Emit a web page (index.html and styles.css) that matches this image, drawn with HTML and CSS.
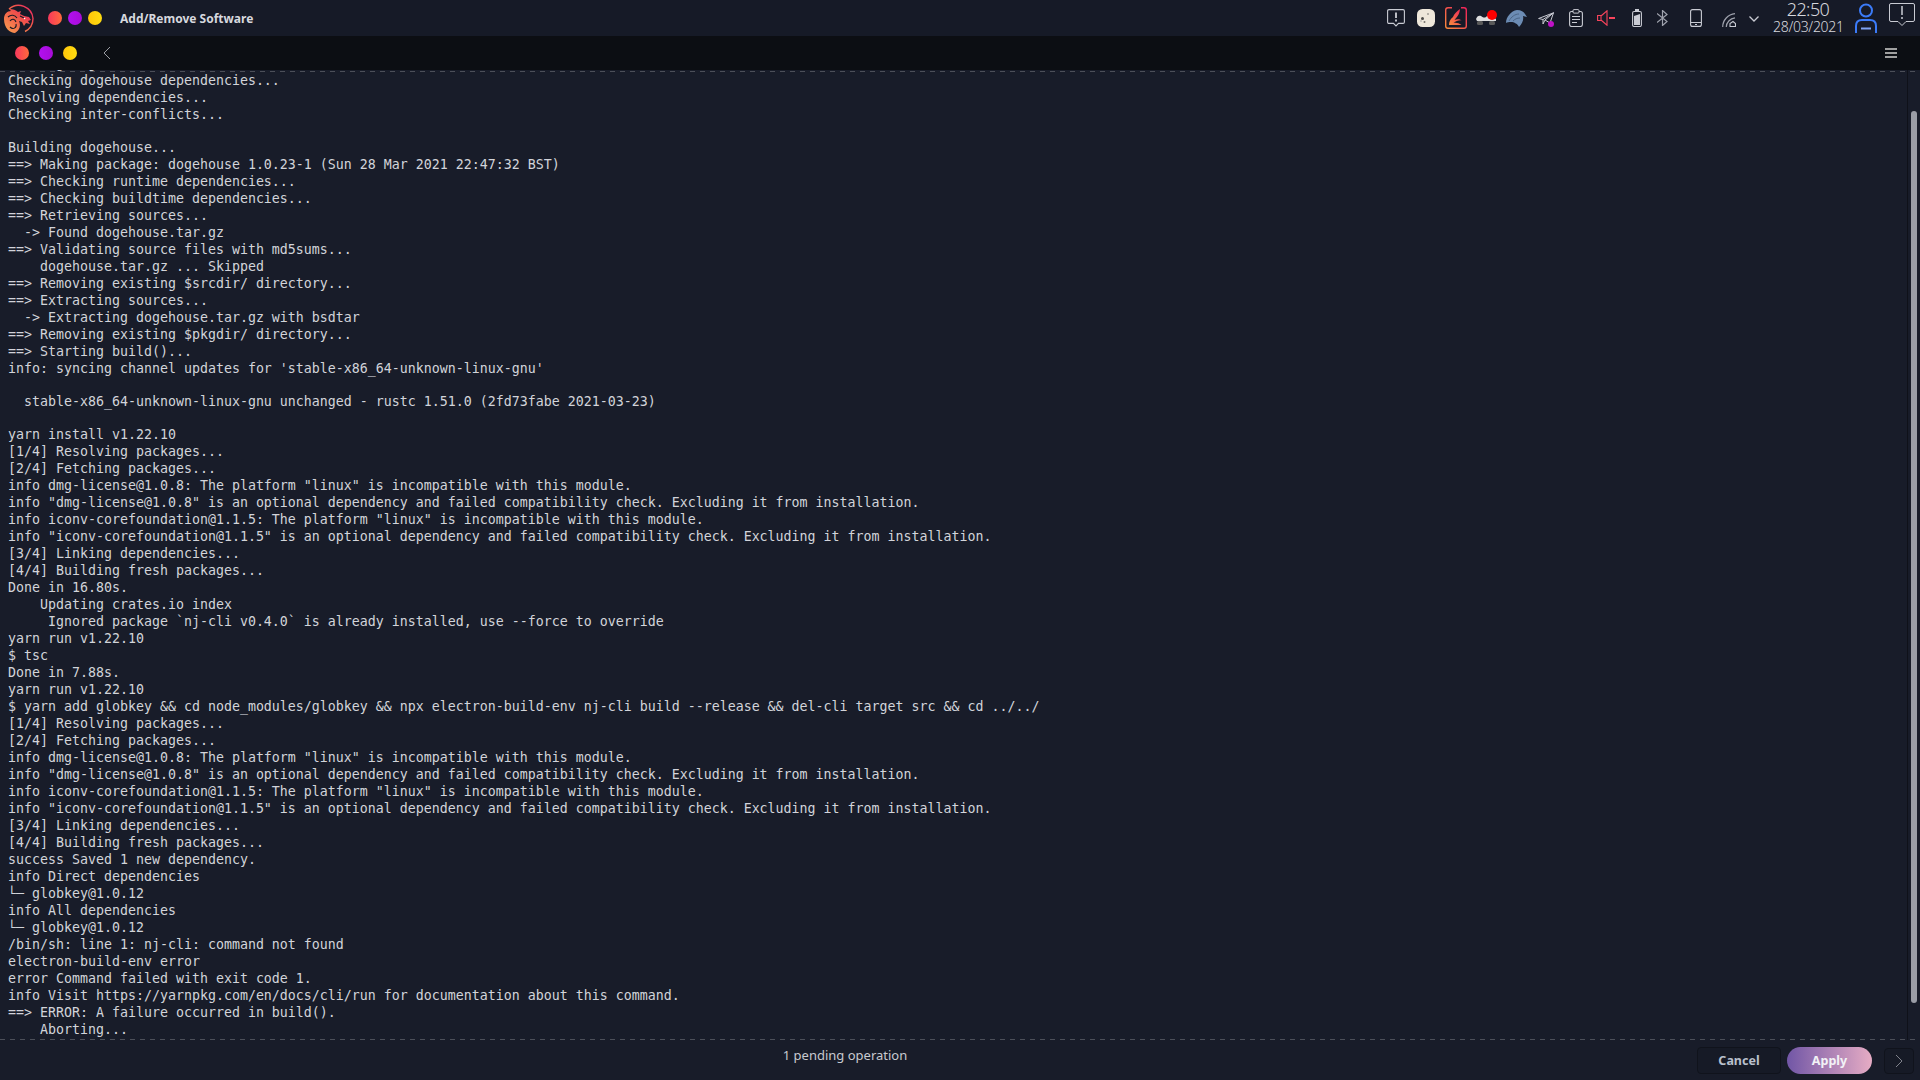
FILE: index.html
```html
<!DOCTYPE html>
<html lang="en">
<head>
<meta charset="utf-8">
<title>Add/Remove Software</title>
<link rel="stylesheet" href="styles.css">
</head>
<body>
<header class="topbar">
  <div class="top-left">
    <svg class="logo" width="31" height="31" viewBox="0 0 31 31"><defs><linearGradient id="lg" x1="0" y1="1" x2="1" y2="0"><stop offset="0" stop-color="#f9a450"/><stop offset="0.6" stop-color="#f0554a"/><stop offset="1" stop-color="#ef1f68"/></linearGradient></defs><path d="M6 6A14.500 14.500 0 0 1 30 15.500A14.500 14.500 0 0 1 22 28.500" fill="none" stroke="url(#lg)" stroke-width="1.4"/><path d="M1 16C1 11 4 8 8 8L6 6C10 6 13 7 15 9L18 8L17 11L21 13L26 14L28 17L25 18L27 21L23 20L21 23L19 19L16 18C18 22 17 27 12 30C7 30 1 25 1 16Z" fill="url(#lg)"/><path d="M5 14C8 11 12 12 14 15M7 18C9 15 12 16 13 19M7 24C10 27 14 25 13 21M17 13L21 15" fill="none" stroke="#161a27" stroke-width="1.100"/><circle cx="21.500" cy="15.500" r="0.800" fill="#fff"/></svg>
    <div class="dots top-dots"><span class="dot red"></span><span class="dot purple"></span><span class="dot yellow"></span></div>
    <span class="title">Add/Remove Software</span>
  </div>
  <div class="tray">
    <svg class="i-note" width="18" height="18" viewBox="0 0 18 18"><path d="M2 .6H16Q17.400 .6 17.400 2V13Q17.400 14.400 16 14.400H11.500L9 17L6.500 14.400H2Q.6 14.400 .6 13V2Q.6 .6 2 .6Z" fill="none" stroke="#c9cbd3" stroke-width="1.100"/><path d="M9 3.500V9M9 10.500V12.500" stroke="#d8dae0" stroke-width="1.700"/></svg>
    <svg class="i-face" width="18" height="18" viewBox="0 0 18 18"><rect width="18" height="18" rx="5.500" fill="#eee7da"/><circle cx="5.500" cy="9.500" r="1.500" fill="#4b4a48"/><circle cx="11" cy="5" r="1" fill="#a09c94"/><circle cx="7.500" cy="13" r="1" fill="#77746e"/><circle cx="4" cy="12" r="0.700" fill="#999"/></svg>
    <svg class="i-red" width="22" height="22" viewBox="0 0 22 22"><defs><linearGradient id="red" x1="0" y1="1" x2="1" y2="0"><stop offset="0" stop-color="#f98b3c"/><stop offset="1" stop-color="#f0205a"/></linearGradient></defs><path d="M7 .7H3Q.7 .7 .7 3V19Q.7 21.300 3 21.300H19Q21.300 21.300 21.300 19V3Q21.300 .7 19 .7H16" fill="none" stroke="url(#red)" stroke-width="1.400"/><path d="M15 2C12 4 9 7 8 10C5 12 4 15 4 18L16.500 18C14 16 11 15.500 8.500 16C11 14 14 13 17 13.500C14 11.500 11.500 12 9.500 13C11.500 10.500 14.500 8 15 2Z" fill="url(#red)"/></svg>
    <svg class="i-car" width="21" height="15" viewBox="0 0 21 15"><path d="M0 9C1 6 3 5 5 6C8 8 9 8 11 6L14 4L20 9V11H1Z" fill="#dedede"/><rect x="1" y="11" width="6" height="4" rx="1.500" fill="#5a5a5a"/><rect x="13" y="11" width="6" height="4" rx="1.500" fill="#5a5a5a"/><circle cx="16" cy="5" r="5" fill="#f00"/></svg>
    <svg class="i-bird" width="21" height="17" viewBox="0 0 21 17"><path d="M0 13C0 7 5 1 11 0C15 0 18 2 19 4L21 7L17 6C18 10 16 14 13 17C12 14 8 12 5 12C3 12 1 12 0 13Z" fill="#6c8cb4"/><path d="M3 11C5 7 9 4 13 4M7 11C9 9 11 8 14 8" fill="none" stroke="#4c6688" stroke-width="1"/></svg>
    <svg class="i-plane" width="17" height="15" viewBox="0 0 17 15"><path d="M.6 6.500L15.500 .8L12 11L7 8L5 12V7.500ZM5 7.500L15.500 .8M7 8L15.500 .8" fill="none" stroke="#c9cbd3" stroke-width="1"/><circle cx="13" cy="12" r="3" fill="#c012c6"/></svg>
    <svg class="i-clip" width="14" height="18" viewBox="0 0 14 18"><rect x=".6" y="2.500" width="12.800" height="15" rx="2" fill="none" stroke="#c9cbd3" stroke-width="1.100"/><rect x="4" y=".6" width="6" height="3.500" rx="1" fill="#161a27" stroke="#c9cbd3"/><path d="M3 7.500H11M3 10.500H11M3 13.500H8" stroke="#c9cbd3"/></svg>
    <svg class="i-spk" width="18" height="16" viewBox="0 0 18 16"><path d="M.6 5.500H4V10.500H.6ZM4 6L10 .8V15.200L4 10" fill="none" stroke="#f9445c" stroke-width="1.100"/><path d="M12 8H18" stroke="#f9445c" stroke-width="2"/></svg>
    <svg class="i-bat" width="10" height="18" viewBox="0 0 10 18"><rect x=".6" y="2.500" width="8.800" height="15" rx="1.500" fill="none" stroke="#c9cbd3" stroke-width="1.100"/><rect x="3" y="0" width="4" height="2" fill="#c9cbd3"/><path d="M2 7L8 5V16H2Z" fill="#c9cbd3"/></svg>
    <svg class="i-bt" width="11" height="16" viewBox="0 0 11 16"><path d="M0 3.500L10 11.500L5.500 15.500V.5L10 4.500L0 12.500" fill="none" stroke="#9fa2ad" stroke-width="1.200"/></svg>
    <svg class="i-phone" width="12" height="18" viewBox="0 0 12 18"><rect x=".6" y=".6" width="10.800" height="16.800" rx="2" fill="none" stroke="#c9cbd3" stroke-width="1.100"/><path d="M1 13.500H11M5 15.500H7" stroke="#c9cbd3"/></svg>
    <svg class="i-wifi" width="14" height="14" viewBox="0 0 14 14"><path d="M.7 14C.7 7 6 1.500 13 .7M4.300 14C4.300 9.500 8 5.500 13 4.800" fill="none" stroke="#9fa2ad" stroke-width="1.200"/><path d="M8 13.500V10.500L11 8.500L13.500 10.500V13.500Z" fill="none" stroke="#c9cbd3" stroke-width="1.100"/></svg>
    <svg class="i-chev" width="10" height="6" viewBox="0 0 10 6"><path d="M.5 .5L5 5L9.500 .5" fill="none" stroke="#c9cbd3" stroke-width="1.300"/></svg>
    <div class="clock"><div class="time">22:50</div><div class="date">28/03/2021</div></div>
    <svg class="user" width="22" height="30" viewBox="0 0 22 30"><circle cx="11" cy="7.500" r="6" fill="none" stroke="#3b7bf8" stroke-width="2"/><path d="M1 30V23Q1 17 7 17H15Q21 17 21 23V30" fill="none" stroke="#3b7bf8" stroke-width="2"/><path d="M6 25.500H16" stroke="#7fa3f2" stroke-width="2"/></svg>
    <svg class="note" width="26" height="24" viewBox="0 0 26 24"><path d="M2 .5H24Q25.500 .5 25.500 2V17Q25.500 18.500 24 18.500H17L13 22.500L9 18.500H2Q.5 18.500 .5 17V2Q.5 .5 2 .5Z" fill="none" stroke="#c9cbd3" stroke-width="1"/><path d="M13 3V12M13 14V16" stroke="#c9cbd3" stroke-width="1.500"/></svg>
  </div>
</header>
<nav class="toolbar">
  <div class="tool-left">
    <div class="dots tool-dots"><span class="dot red"></span><span class="dot purple"></span><span class="dot yellow"></span></div>
    <svg class="back" width="8" height="14" viewBox="0 0 8 14"><path d="M7 1L1 7L7 13" fill="none" stroke="#9b9da3" stroke-width="1"/></svg>
  </div>
  <div class="burger"><span></span><span></span><span></span></div>
</nav>
<main class="logwrap">
<pre class="log">Cloning dogehouse build files...
Checking dogehouse dependencies...
Resolving dependencies...
Checking inter-conflicts...
<span class="gap"></span>Building dogehouse...
==&gt; Making package: dogehouse 1.0.23-1 (Sun 28 Mar 2021 22:47:32 BST)
==&gt; Checking runtime dependencies...
==&gt; Checking buildtime dependencies...
==&gt; Retrieving sources...
  -&gt; Found dogehouse.tar.gz
==&gt; Validating source files with md5sums...
    dogehouse.tar.gz ... Skipped
==&gt; Removing existing $srcdir/ directory...
==&gt; Extracting sources...
  -&gt; Extracting dogehouse.tar.gz with bsdtar
==&gt; Removing existing $pkgdir/ directory...
==&gt; Starting build()...
info: syncing channel updates for 'stable-x86_64-unknown-linux-gnu'
<span class="gap"></span>  stable-x86_64-unknown-linux-gnu unchanged - rustc 1.51.0 (2fd73fabe 2021-03-23)
<span class="gap"></span>yarn install v1.22.10
[1/4] Resolving packages...
[2/4] Fetching packages...
info dmg-license@1.0.8: The platform "linux" is incompatible with this module.
info "dmg-license@1.0.8" is an optional dependency and failed compatibility check. Excluding it from installation.
info iconv-corefoundation@1.1.5: The platform "linux" is incompatible with this module.
info "iconv-corefoundation@1.1.5" is an optional dependency and failed compatibility check. Excluding it from installation.
[3/4] Linking dependencies...
[4/4] Building fresh packages...
Done in 16.80s.
    Updating crates.io index
     Ignored package `nj-cli v0.4.0` is already installed, use --force to override
yarn run v1.22.10
$ tsc
Done in 7.88s.
yarn run v1.22.10
$ yarn add globkey &amp;&amp; cd node_modules/globkey &amp;&amp; npx electron-build-env nj-cli build --release &amp;&amp; del-cli target src &amp;&amp; cd ../../
[1/4] Resolving packages...
[2/4] Fetching packages...
info dmg-license@1.0.8: The platform "linux" is incompatible with this module.
info "dmg-license@1.0.8" is an optional dependency and failed compatibility check. Excluding it from installation.
info iconv-corefoundation@1.1.5: The platform "linux" is incompatible with this module.
info "iconv-corefoundation@1.1.5" is an optional dependency and failed compatibility check. Excluding it from installation.
[3/4] Linking dependencies...
[4/4] Building fresh packages...
success Saved 1 new dependency.
info Direct dependencies
└─ globkey@1.0.12
info All dependencies
└─ globkey@1.0.12
/bin/sh: line 1: nj-cli: command not found
electron-build-env error
error Command failed with exit code 1.
info Visit https://yarnpkg.com/en/docs/cli/run for documentation about this command.
==&gt; ERROR: A failure occurred in build().
    Aborting...</pre>
  <div class="scrolltrack"><div class="thumb"></div></div>
</main>
<footer class="footer">
  <div class="pending">1 pending operation</div>
  <div class="actions">
    <button class="btn cancel">Cancel</button>
    <button class="btn apply">Apply</button>
    <button class="next"><svg width="8" height="14" viewBox="0 0 8 14"><path d="M1 1L7 7L1 13" fill="none" stroke="#80838c" stroke-width="1"/></svg></button>
  </div>
</footer>
</body>
</html>
```
FILE: styles.css
```css
* { box-sizing: border-box; }
html, body { margin: 0; height: 100%; }
body { width: 1920px; height: 1080px; overflow: hidden; background: #181c29; display: flex; flex-direction: column; font-family: "Noto Sans", sans-serif; color: #d4d6dc; }
svg { flex: none; display: block; }
.topbar { height: 36px; flex: none; background: #161a27; display: flex; justify-content: space-between; align-items: center; }
.top-left { display: flex; align-items: center; height: 36px; padding-left: 3px; }
.dots { display: flex; }
.dot { width: 14px; height: 14px; border-radius: 50%; display: block; }
.red { background: linear-gradient(90deg, #f8385c, #ff6a3c); }
.purple { background: linear-gradient(90deg, #b210f0, #a80cd8); }
.yellow { background: linear-gradient(90deg, #ffc60a, #ffdc10); }
.top-dots { gap: 6px; margin-left: 14px; }
.title { margin-left: 18px; font-size: 12px; font-weight: 700; color: #d6d8de; }
.tray { display: flex; align-items: center; height: 36px; padding-right: 5px; }
.i-face { margin-left: 12px; }
.i-red { margin-left: 10px; }
.i-car { margin-left: 9px; margin-bottom: 1px; }
.i-bird { margin-left: 9px; margin-bottom: -1px; }
.i-plane { margin-left: 11px; margin-bottom: -2px; }
.i-clip { margin-left: 14px; }
.i-spk { margin-left: 14px; }
.i-bat { margin-left: 17px; }
.i-bt { margin-left: 15px; }
.i-phone { margin-left: 22px; }
.i-wifi { margin-left: 20px; margin-bottom: -4px; }
.i-chev { margin-left: 13px; margin-bottom: -1px; }
.clock { width: 70px; margin-left: 14px; text-align: center; color: #d6d8de; white-space: nowrap; }
.time { font-size: 18px; height: 17px; line-height: 15px; letter-spacing: -.6px; font-weight: 300; }
.date { font-size: 14px; height: 15px; line-height: 14px; margin-top: 1px; letter-spacing: -.3px; font-weight: 300; }
.user { margin-left: 12px; align-self: flex-end; margin-bottom: 3px; }
.note { margin-left: 12px; margin-bottom: 6px; }
.toolbar { height: 34px; flex: none; background: #0c0e13; display: flex; justify-content: space-between; align-items: center; }
.tool-left { display: flex; align-items: center; }
.tool-dots { gap: 10px; margin-left: 15px; }
.back { margin-left: 26px; }
.burger { display: flex; flex-direction: column; gap: 2px; margin-right: 23px; }
.burger span { display: block; width: 12px; height: 2px; background: #a0a0a0; }
.logwrap { height: 970px; flex: none; position: relative; overflow: hidden;
  background-image: repeating-linear-gradient(90deg, #4c4f59 0 5px, transparent 5px 10px), repeating-linear-gradient(90deg, #4c4f59 0 5px, transparent 5px 10px);
  background-size: 100% 1px, 100% 1px; background-position: 0 1px, 0 969px; background-repeat: no-repeat; }
.log { margin: -15px 0 0 0; padding-left: 8px; font-family: "DejaVu Sans Mono", monospace; font-size: 13.295px; line-height: 17px; color: #d2d4da; white-space: pre; }
.gap { display: block; height: 16px; }
.scrolltrack { position: absolute; top: 0; right: 0; bottom: 0; width: 13px; border-left: 1px solid #0f1119; }
.thumb { position: absolute; left: 3px; top: 41px; width: 6px; height: 892px; border-radius: 3px; background: #9a9da6; }
.footer { flex: 1; background: #181c29; position: relative; display: flex; align-items: center; justify-content: flex-end; }
.pending { position: absolute; left: 0; width: 1690px; top: 6px; text-align: center; font-size: 13px; color: #c8cad0; }
.actions { display: flex; align-items: center; gap: 6px; padding-right: 6px; margin-top: 1px; }
.btn { height: 27px; font-family: inherit; font-size: 12.500px; font-weight: 700; padding: 0; }
.cancel { width: 84px; background: #161a26; border: 1px solid #10131c; border-radius: 4px; color: #b9c0cc; }
.apply { width: 85px; border: 0; border-radius: 14px; color: #f2f2f6; background: linear-gradient(90deg, #7156a6, #e6acc4); }
.next { width: 30px; height: 26px; margin-left: 6px; background: #161a26; border: 1px solid #10131c; border-radius: 4px; display: flex; align-items: center; justify-content: center; padding: 0; }
```
